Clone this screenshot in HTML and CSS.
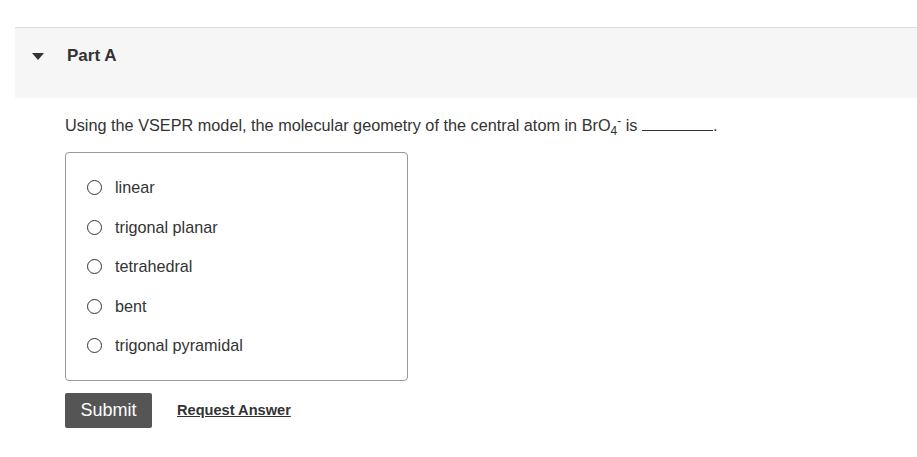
FILE: index.html
```html
<!DOCTYPE html>
<html lang="en">
<head>
    <meta charset="UTF-8">
    <title>Part A</title>
    <link rel="stylesheet" href="styles.css">
</head>
<body>
    <div class="part">
        <div class="part-header">
            <span class="caret"></span>
            <h2>Part A</h2>
        </div>
        <div class="part-body">
            <p class="question">Using the VSEPR model, the molecular geometry of the central atom in BrO<sub>4</sub><sup>-</sup> is <span class="blank"></span>.</p>
            <div class="choices">
                <label class="choice"><input type="radio" name="geo"><span>linear</span></label>
                <label class="choice"><input type="radio" name="geo"><span>trigonal planar</span></label>
                <label class="choice"><input type="radio" name="geo"><span>tetrahedral</span></label>
                <label class="choice"><input type="radio" name="geo"><span>bent</span></label>
                <label class="choice"><input type="radio" name="geo"><span>trigonal pyramidal</span></label>
            </div>
            <div class="actions">
                <button class="submit">Submit</button>
                <a href="#" class="request">Request Answer</a>
            </div>
        </div>
    </div>
</body>
</html>
```

FILE: styles.css
```css
body {
    margin: 0;
    font-family: "Liberation Sans", Arial, sans-serif;
    color: #333;
    background: #fff;
}

.part {
    margin-top: 27px;
    margin-left: 15px;
}

.part-header {
    display: flex;
    align-items: center;
    height: 71px;
    background-color: #f6f6f6;
    border-top: 1px solid #dcdcdc;
    padding-left: 17px;
    padding-bottom: 14px;
    box-sizing: border-box;
}

.caret {
    width: 0;
    height: 0;
    border-left: 6.5px solid transparent;
    border-right: 6.5px solid transparent;
    border-top: 7px solid #333;
}

.part-header h2 {
    margin: 0 0 0 23px;
    font-size: 17px;
    font-weight: bold;
    color: #333;
}

.part-body {
    padding-left: 50px;
}

.question {
    margin: 16px 0 0;
    font-size: 16.25px;
    line-height: 22px;
}

.question sub,
.question sup {
    font-size: 12px;
    line-height: 0;
}

.blank {
    display: inline-block;
    width: 71px;
    border-bottom: 1px solid #333;
}

.choices {
    width: 341px;
    margin-top: 16px;
    border: 1px solid #999;
    border-radius: 4px;
    padding: 15px 0 14px;
}

.choice {
    display: flex;
    align-items: center;
    height: 39.5px;
    padding-left: 21px;
    font-size: 16.2px;
}

.choice input {
    appearance: none;
    -webkit-appearance: none;
    width: 15px;
    height: 15px;
    margin: 0 13px 0 0;
    border: 1.5px solid #333;
    border-radius: 50%;
    background: #fff;
    box-sizing: border-box;
}

.actions {
    display: flex;
    align-items: center;
    margin-top: 12px;
}

.submit {
    font-family: inherit;
    font-size: 18px;
    color: #fff;
    background-color: #555;
    border: none;
    border-radius: 2px;
    width: 87px;
    height: 35px;
    cursor: pointer;
}

.request {
    margin-left: 25px;
    font-size: 14.6px;
    font-weight: bold;
    color: #333;
}
```
